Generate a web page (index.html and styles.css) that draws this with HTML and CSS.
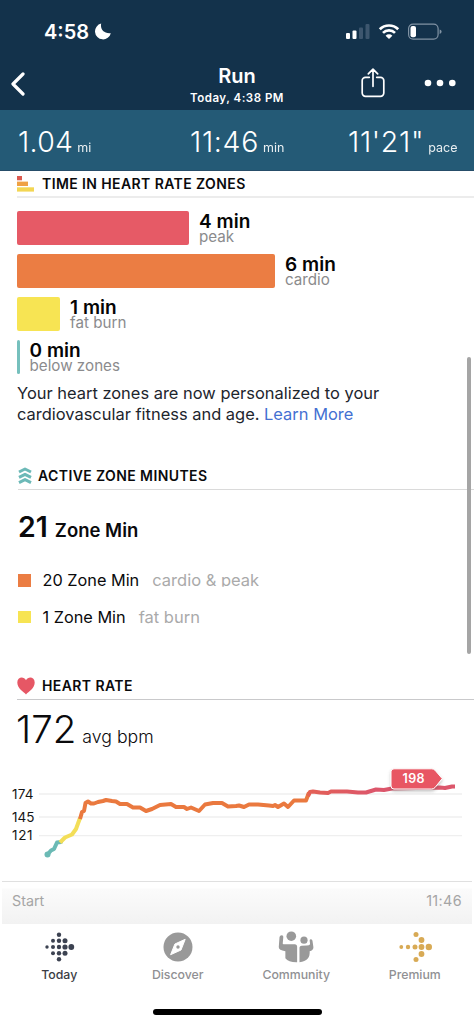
FILE: index.html
```html
<!DOCTYPE html>
<html lang="en">
<head>
<meta charset="utf-8">
<meta name="viewport" content="width=device-width, initial-scale=1">
<title>Run</title>
<link rel="stylesheet" href="styles.css">
</head>
<body>
<div class="app">
  <header class="top">
    <div class="status">
      <span class="clock">4:58</span>
      <svg class="moon" width="17" height="17" viewBox="0 0 17 17"><path d="M6.2.6C5 5.6 8.600 11 15.800 10.200A8 8 0 1 1 6.200.600Z" fill="#fff"/></svg>
      <svg class="signals" width="97" height="18" viewBox="0 0 97 18">
        <g fill="#fff"><rect x="1" y="10" width="4" height="6" rx="1"/><rect x="7.500" y="7.500" width="4" height="8.500" rx="1"/></g>
        <g fill="#3d566e"><rect x="14" y="4.500" width="4" height="11.500" rx="1"/><rect x="20.500" y="1" width="4" height="15" rx="1"/></g>
        <g fill="none" stroke="#fff" stroke-width="2.700"><path d="M34.800 6.300a13 13 0 0 1 18.400 0"/><path d="M38 9.900a8.500 8.500 0 0 1 12 0"/></g>
        <path d="M40.600 12.700a4.800 4.800 0 0 1 6.800 0L44 16Z" fill="#fff"/>
        <rect x="63.600" y="1.100" width="29.500" height="15" rx="4.500" fill="none" stroke="#8193a4" stroke-width="1.200"/>
        <rect x="65.500" y="3" width="5.500" height="11.200" rx="2" fill="#fff"/>
        <path d="M94.600 6.500q2 .6 2 2.200t-2 2.200Z" fill="#8193a4"/>
      </svg>
    </div>
    <nav class="nav">
      <svg class="back" width="14" height="24" viewBox="0 0 14 24"><path d="M12 2 2 12 12 22" fill="none" stroke="#fff" stroke-width="3.200" stroke-linecap="round" stroke-linejoin="round"/></svg>
      <div class="title"><h1>Run</h1><p>Today, 4:38 PM</p></div>
      <div class="actions">
        <svg width="24" height="30" viewBox="0 0 24 30" fill="none" stroke="#fff" stroke-width="1.700" stroke-linecap="round" stroke-linejoin="round"><path d="M8.300 9.300H4.500a3.300 3.300 0 0 0-3.300 3.300V25a3.300 3.300 0 0 0 3.300 3.300h15a3.300 3.300 0 0 0 3.300-3.300V12.600a3.300 3.300 0 0 0-3.300-3.300h-3.800M12 18.300V1.300M7.300 5.800 12 1.200l4.700 4.600"/></svg>
        <svg width="32" height="8" viewBox="0 0 32 8" fill="#fff"><circle cx="4" cy="4" r="3.300"/><circle cx="16" cy="4" r="3.300"/><circle cx="28.300" cy="4" r="3.300"/></svg>
      </div>
    </nav>
    <div class="stats">
      <div class="stat"><b class="n1">1.04</b><span>mi</span></div>
      <div class="stat"><b>11:46</b><span>min</span></div>
      <div class="stat"><b>11'21"</b><span>pace</span></div>
    </div>
  </header>

  <main class="content">
    <section class="zones">
      <h2 class="head head-zones">
        <svg width="17" height="16" viewBox="0 0 17 16"><path d="M0 0h5v4.300H0z" fill="#dc5a50"/><path d="M0 5.600h11v4.400H0z" fill="#efa143"/><path d="M0 11.300h17v4.300H0z" fill="#f3d653"/></svg>
        <span>TIME IN HEART RATE ZONES</span>
      </h2>
      <div class="bars">
        <div class="bar"><i class="fill peak"></i><div class="label"><b>4 min</b><span>peak</span></div></div>
        <div class="bar"><i class="fill cardio"></i><div class="label"><b>6 min</b><span>cardio</span></div></div>
        <div class="bar"><i class="fill fat"></i><div class="label"><b>1 min</b><span>fat burn</span></div></div>
        <div class="bar"><i class="fill below"></i><div class="label"><b>0 min</b><span>below zones</span></div></div>
      </div>
      <p class="note">Your heart zones are now personalized to your<br>cardiovascular fitness and age. <a>Learn More</a></p>
    </section>

    <section class="active">
      <h2 class="head head-active">
        <svg width="14" height="17" viewBox="0 0 14 17" fill="none" stroke="#6cb9b7" stroke-width="3" stroke-linejoin="round"><path d="M1 5 7 2l6 3M1 10.300l6-3 6 3M1 15.600l6-3 6 3"/></svg>
        <span>ACTIVE ZONE MINUTES</span>
      </h2>
      <p class="total"><b>21</b><span>Zone Min</span></p>
      <ul class="legend">
        <li><i class="cardio"></i><span class="amount">20 Zone Min</span><span class="kind clip">cardio &amp; peak</span></li>
        <li><i class="fat"></i><span class="amount">1 Zone Min</span><span class="kind">fat burn</span></li>
      </ul>
    </section>

    <section class="heart">
      <h2 class="head head-heart">
        <svg width="18" height="18" viewBox="0 0 18 18"><path d="M9 17.500C6.500 14.500.3 11.500.3 5.500.3-.2 6.800-1 9 3.200 11.200-1 17.700-.2 17.700 5.500c0 6-6.200 9-8.700 12Z" fill="#e65765"/></svg>
        <span>HEART RATE</span>
      </h2>
      <p class="avg"><b>172</b><span>avg bpm</span></p>
      <svg class="chart" width="474" height="123" viewBox="0 758 474 123">
        <defs>
          <linearGradient id="effort" gradientUnits="userSpaceOnUse" x1="300" x2="375" y1="0" y2="0"><stop stop-color="#ea793f"/><stop offset=".14" stop-color="#e36057"/><stop offset="1" stop-color="#dc566b"/></linearGradient>
          <filter id="shade" x="-20%" y="-30%" width="140%" height="180%"><feDropShadow dx="0" dy="2" stdDeviation="1.500" flood-color="#555" flood-opacity=".35"/></filter>
        </defs>
        <path d="M39 794H462M39 817H462M39 835.600H462" stroke="#efefef" stroke-width="1.300"/>
        <g class="axis"><text x="12" y="798.500" textLength="21.500">174</text><text x="12" y="821.700" textLength="22.500">145</text><text x="12" y="840.200" textLength="20.500">121</text></g>
        <g fill="none" stroke-width="4" stroke-linejoin="round">
          <path d="M47.500 854.500 51 850.500 54 849 57 842.500 61 842" stroke="#6bbab5" stroke-linecap="round"/>
          <path d="M60 842.500 65 837.500 72 834.500 76 829 80 818" stroke="#f3de58"/>
          <path d="M80 819 82 812 84 811 85.500 803 88 801.500 91 803.500 94 803.500 98 802 103 801 106 800 112 801 116 801.500 120 804 127 804 133 807.500 140 807.500 146 811 152 809 160 805 171 804 176 807 184 807 187 809 191 807.500 199 811 205 804.500 213 803 222 803 228 806.500 236 806 239 805.500 244 807 249 804.500 258 804.500 269 805.500 273 806 275 805 278 807 284 803.500 288 807 294 800.500 306 800.500 309 792.500" stroke="#ea793f"/>
          <path d="M308 796 310 792 313 791.500 320 792.500 328 793 331 791.500 347 791.500 358 792.500 366 792.500 376 789.500 384 790 392 788.500 440 787.500 445 788 452 786.500 455 786.500" stroke="url(#effort)"/>
        </g>
        <circle cx="47.500" cy="854.500" r="3" fill="#6bbab5"/>
        <path d="M394 768.800H431.500Q433.500 768.800 435 770.200L442.200 778.600 435 787.500Q433.500 789 431.500 789H394A3 3 0 0 1 391 786V771.800A3 3 0 0 1 394 768.800Z" fill="#e85663" stroke="#fff" stroke-width="1" filter="url(#shade)"/>
        <text class="tag" x="402.500" y="783" textLength="22">198</text>
      </svg>
      <div class="range"><span>Start</span><span class="end">11:46</span></div>
    </section>
    <i class="scroll"></i>
  </main>

  <footer class="tabs">
    <a class="tab on">
      <svg width="32" height="32" viewBox="0 0 32 32" fill="#3c4251"><circle cx="4" cy="16" r="1.700"/><circle cx="10" cy="16" r="2"/><circle cx="16" cy="16" r="2.200"/><circle cx="22" cy="16" r="2.600"/><circle cx="28.300" cy="16" r="2.900"/><circle cx="10" cy="9.800" r="2"/><circle cx="16" cy="9.800" r="2.200"/><circle cx="22" cy="9.800" r="2.500"/><circle cx="10" cy="22.200" r="2"/><circle cx="16" cy="22.200" r="2.200"/><circle cx="22" cy="22.200" r="2.500"/><circle cx="16" cy="3.700" r="2.200"/><circle cx="16" cy="28.300" r="2.200"/></svg>
      <span>Today</span>
    </a>
    <a class="tab">
      <svg width="32" height="32" viewBox="0 0 32 32"><circle cx="16" cy="16" r="14.500" fill="#999"/><path d="M23.200 8.300 19 19 8.600 23.700 12.900 13Z" fill="#fff" stroke="#fff" stroke-linejoin="round"/><circle cx="16" cy="16" r="1.700" fill="#999"/></svg>
      <span>Discover</span>
    </a>
    <a class="tab">
      <svg width="38" height="34" viewBox="0 0 38 34" fill="#999"><circle cx="14" cy="5.500" r="5.100"/><circle cx="27.500" cy="9.700" r="3.800"/><path d="M1.500 6.400Q1.800 4.500 3.800 4.500 5.800 4.800 5.500 6.500L4.900 13.500Q5.500 14.300 8 14H18Q20.200 14.200 20.200 16.500V33.300Q11 33.500 7.700 29V21.500Q.5 20.500.7 17Z"/><path d="M22.700 17.500Q23 15.700 25 15.700L30.500 15.400Q33 15.200 34 14L33.500 10Q33.600 8.600 35 8.700 36.200 8.800 36.500 10.300L37.500 17.200Q37.500 20.500 33.500 21.500 34.500 31.500 22.700 33.300Z"/></svg>
      <span>Community</span>
    </a>
    <a class="tab">
      <svg width="34" height="32" viewBox="0 0 34 32" fill="#d8aa55"><circle cx="3.300" cy="16" r="1.900"/><circle cx="10" cy="16" r="2.200"/><circle cx="17" cy="16" r="2.500"/><circle cx="23.500" cy="16" r="2.900"/><circle cx="30.800" cy="16" r="3.200"/><circle cx="23.500" cy="9" r="2.900"/><circle cx="23.500" cy="23" r="2.900"/><circle cx="18" cy="3.400" r="2.500"/><circle cx="18" cy="28.600" r="2.500"/></svg>
      <span>Premium</span>
    </a>
  </footer>
  <div class="home"><i></i></div>
</div>
</body>
</html>
```
FILE: styles.css
```css
* { box-sizing: border-box; margin: 0; padding: 0; }
body { width: 474px; height: 1025px; background: #fff; color: #0a0a0c; font-family: Inter, Roboto, sans-serif; overflow: hidden; }
svg { display: block; flex: none; }
i { display: block; font-style: normal; flex: none; }
span, b { white-space: nowrap; }
.app { width: 474px; height: 1025px; display: flex; flex-direction: column; }

.top { height: 171px; background: #13324b; color: #fff; flex: none; }
.status { height: 56px; display: flex; align-items: flex-start; padding: 18px 32px 0 44px; }
.clock { font-size: 20px; line-height: 28px; font-weight: 600; width: 51px; }
.moon { margin-top: 5px; }
.signals { margin: 5px 0 0 auto; }
.nav { height: 54px; display: grid; grid-template-columns: 160px 154px 160px; align-items: start; }
.back { margin: 16px 0 0 11px; }
.title { text-align: center; padding-top: 6px; }
.title h1 { font-size: 20px; line-height: 28px; font-weight: 600; letter-spacing: 0; }
.title p { font-size: 11.500px; line-height: 16px; font-weight: 600; letter-spacing: .5px; }
.actions { display: flex; align-items: center; justify-content: space-between; padding: 12px 18px 0 47px; }
.stats { height: 61px; background: #245a76; border-bottom: 1px solid #264d69; display: grid; grid-template-columns: 190px 158px 126px; }
.stat { display: flex; align-items: baseline; gap: 4px; line-height: 63px; height: 60px; }
.stat:first-child { padding-left: 18px; }
.stat b { font-size: 28.500px; font-weight: 300; letter-spacing: .7px; }
.stat .n1 { letter-spacing: .3px; }
.stat span { font-size: 12.500px; font-weight: 400; opacity: .9; }

.content { position: relative; height: 753px; flex: none; }
.head { display: flex; align-items: center; font-size: 14px; line-height: 20px; font-weight: 600; letter-spacing: .4px; margin-left: 17px; }
.head-zones { height: 27px; border-bottom: 2px solid #ececec; gap: 8px; }
.bars { padding: 13px 0 0 17px; display: grid; gap: 9px; grid-auto-rows: 34px; }
.bar { display: flex; gap: 10px; }
.fill { height: 34px; border-radius: 2px; }
.fill.peak { width: 172px; }
.fill.cardio { width: 258px; }
.fill.fat { width: 43px; }
.fill.below { width: 2.500px; }
.peak { background: #e65a66; }
.cardio { background: #eb7d43; }
.fat { background: #f7e453; }
.below { background: #76c0bd; }
.label { display: flex; flex-direction: column; color: #050505; }
.label b { font-size: 19px; line-height: 21px; font-weight: 600; letter-spacing: .05px; }
.label span { font-size: 15.200px; line-height: 10px; color: #8b8b8d; }
.note { margin: 9px 0 0 17px; font-size: 16.450px; line-height: 20.500px; color: #1d252d; }
.note a { color: #4470d2; }

.active { padding-top: 38px; }
.head-active { height: 28px; border-bottom: 1px solid #dadada; gap: 6px; margin-left: 18px; }
.total { height: 72px; display: flex; align-items: baseline; line-height: 73px; padding-left: 18px; gap: 7px; }
.total b { font-size: 28.500px; font-weight: 600; }
.total span { font-size: 18.500px; font-weight: 600; }
.legend { list-style: none; display: grid; grid-auto-rows: 36.500px; padding-left: 18px; }
.legend li { display: flex; align-items: center; }
.legend i { width: 12.500px; height: 12.500px; margin-right: 12px; }
.amount { font-size: 16.300px; line-height: 20px; margin-right: 13px; }
.kind { font-size: 16.500px; line-height: 20px; color: #aaa; }
.clip { clip-path: inset(0 0 3.500px 0); }

.heart { padding-top: 37px; }
.head-heart { height: 28px; border-bottom: 1px solid #c9c9cb; gap: 7px; }
.avg { height: 58px; display: flex; align-items: baseline; line-height: 58px; padding-left: 16px; gap: 6px; }
.avg b { font-size: 38.500px; font-weight: 300; }
.avg span { font-size: 17.700px; font-weight: 300; }
.axis { font-size: 13.500px; fill: #151515; }
.tag { font-size: 12.500px; font-weight: 600; fill: #fff; }
.range { height: 43px; margin: 0 2px; padding: 0 10px; border-top: 1px solid #e0e0e0; background: linear-gradient(#fff 6px, #fbfbfb 7px, #f2f2f2); display: flex; justify-content: space-between; font-size: 14.300px; line-height: 38px; color: #a5a5a5; }
.end { letter-spacing: .4px; }
.scroll { position: absolute; top: 186px; right: 3.500px; width: 3.500px; height: 297px; border-radius: 2px; background: #a5a5a5; }

.tabs { height: 76px; display: grid; grid-template-columns: repeat(4, 118.500px); flex: none; }
.tab { display: flex; flex-direction: column; align-items: center; padding-top: 7px; font-size: 12.300px; font-weight: 500; line-height: 16px; color: #909093; }
.tab svg { height: 32px; margin-bottom: 4px; }
.tab.on { color: #3b3d45; }
.home { height: 25px; display: flex; justify-content: center; padding-top: 9px; }
.home i { width: 169px; height: 6px; border-radius: 3px; background: #000; }
```
